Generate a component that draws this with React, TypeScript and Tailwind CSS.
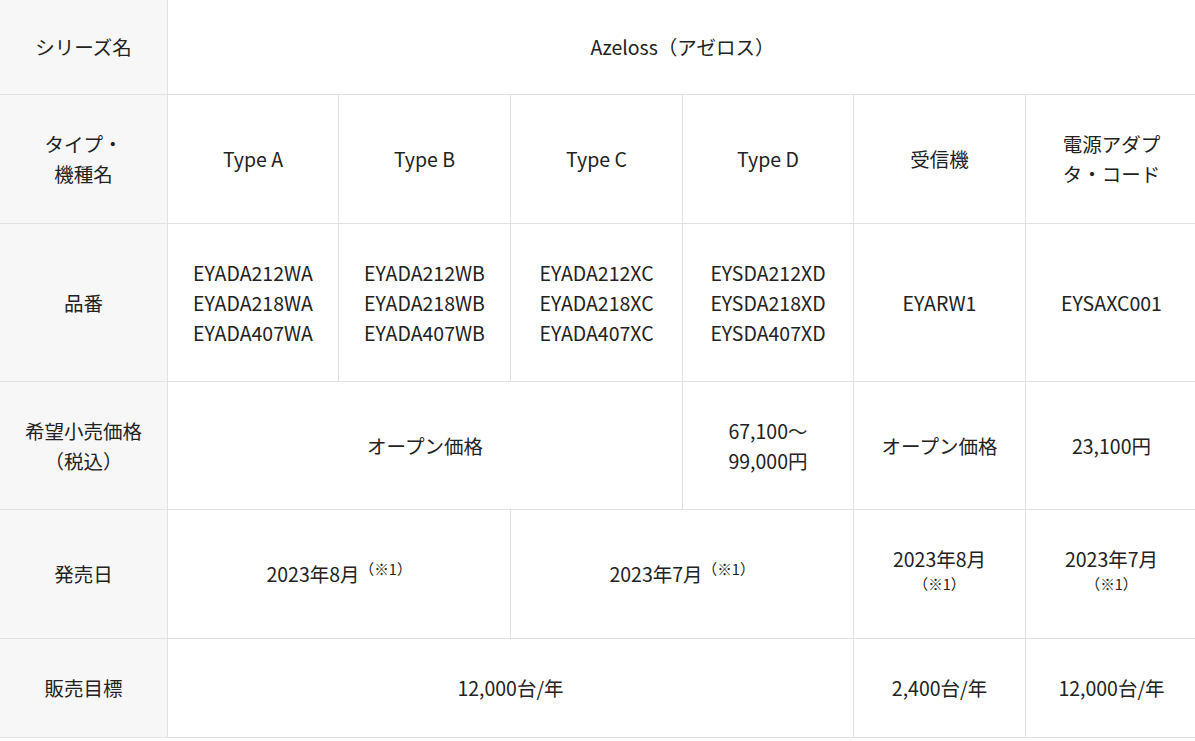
import React from "react";

const font = { fontFamily: '"Noto Sans CJK JP", "Noto Sans", sans-serif' };

function Cell({
  children,
  head = false,
  span = "",
}: {
  children: React.ReactNode;
  head?: boolean;
  span?: string;
}) {
  return (
    <div
      className={`flex items-center justify-center text-center leading-[30px] ${
        head ? "bg-[#f7f7f7]" : "bg-white"
      } ${span}`}
    >
      <div>{children}</div>
    </div>
  );
}

export default function App() {
  return (
    <div className="w-[1195px] h-[741px] overflow-hidden bg-white" style={font}>
      <div className="grid grid-cols-[167px_170px_171px_171px_170px_171px_171px] grid-rows-[94px_128px_157px_127px_128px_98px] bg-[#e2e2e2] gap-px pb-px w-[1197px] text-[19.5px] text-[#222]">
        <Cell head>シリーズ名</Cell>
        <Cell span="col-span-6">Azeloss（アゼロス）</Cell>

        <Cell head>
          タイプ・
          <br />
          機種名
        </Cell>
        <Cell>Type A</Cell>
        <Cell>Type B</Cell>
        <Cell>Type C</Cell>
        <Cell>Type D</Cell>
        <Cell>受信機</Cell>
        <Cell>
          電源アダプ
          <br />
          タ・コード
        </Cell>

        <Cell head>品番</Cell>
        <Cell>
          EYADA212WA
          <br />
          EYADA218WA
          <br />
          EYADA407WA
        </Cell>
        <Cell>
          EYADA212WB
          <br />
          EYADA218WB
          <br />
          EYADA407WB
        </Cell>
        <Cell>
          EYADA212XC
          <br />
          EYADA218XC
          <br />
          EYADA407XC
        </Cell>
        <Cell>
          EYSDA212XD
          <br />
          EYSDA218XD
          <br />
          EYSDA407XD
        </Cell>
        <Cell>EYARW1</Cell>
        <Cell>EYSAXC001</Cell>

        <Cell head>
          希望小売価格
          <br />
          （税込）
        </Cell>
        <Cell span="col-span-3">オープン価格</Cell>
        <Cell>
          67,100〜
          <br />
          99,000円
        </Cell>
        <Cell>オープン価格</Cell>
        <Cell>23,100円</Cell>

        <Cell head>発売日</Cell>
        <Cell span="col-span-2">
          2023年8月<sup>（※1）</sup>
        </Cell>
        <Cell span="col-span-2">
          2023年7月<sup>（※1）</sup>
        </Cell>
        <Cell>
          2023年8月
          <br />
          <sup>（※1）</sup>
        </Cell>
        <Cell>
          2023年7月
          <br />
          <sup>（※1）</sup>
        </Cell>

        <Cell head>販売目標</Cell>
        <Cell span="col-span-4">12,000台/年</Cell>
        <Cell>2,400台/年</Cell>
        <Cell>12,000台/年</Cell>
      </div>
    </div>
  );
}
